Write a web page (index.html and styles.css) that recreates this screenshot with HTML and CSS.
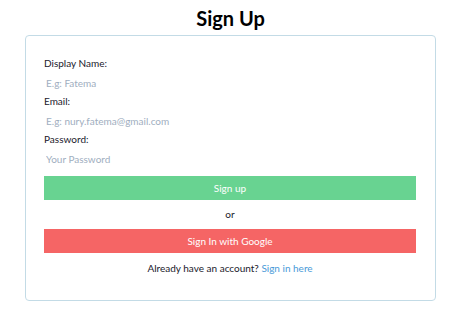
FILE: index.html
```html
<!DOCTYPE html>
<html lang="en">
<head>
    <meta charset="UTF-8">
    <meta name="viewport" content="width=device-width, initial-scale=1.0">
    <title>Sign Up</title>
    <link rel="stylesheet" href="styles.css">
</head>
<body>
    <div class="page">
        <h1>Sign Up</h1>
        <div class="card">
            <form class="signup-form" onsubmit="event.preventDefault()">
                <label for="displayName">Display Name:</label>
                <input type="text" id="displayName" placeholder="E.g: Fatema">
                <label for="email">Email:</label>
                <input type="email" id="email" placeholder="E.g: nury.fatema@gmail.com">
                <label for="password">Password:</label>
                <input type="password" id="password" placeholder="Your Password">
                <button type="submit" class="btn btn-green">Sign up</button>
            </form>
            <p class="or">or</p>
            <button class="btn btn-red">Sign In with Google</button>
            <p class="switch">Already have an account? <a href="#">Sign in here</a></p>
        </div>
    </div>
</body>
</html>
```

FILE: styles.css
```css
body {
    margin: 0;
    font-family: Lato, "Noto Sans", sans-serif;
    font-size: 10px;
    color: #1a202c;
    background: #fff;
}

.page {
    width: 411px;
    margin-left: 25px;
}

h1 {
    margin: 0;
    padding-top: 5px;
    height: 30px;
    line-height: 26px;
    font-size: 20px;
    font-weight: bold;
    text-align: center;
    color: #000;
}

.card {
    border: 1px solid #c3dbe6;
    border-radius: 4px;
    padding: 18px 19px 23px 18px;
}

.signup-form {
    display: flex;
    flex-direction: column;
}

.signup-form label {
    line-height: 19px;
}

.signup-form input {
    height: 19px;
    padding: 0 2px;
    border: none;
    outline: none;
    font-family: inherit;
    font-size: 10px;
    color: #1a202c;
}

.signup-form input::placeholder {
    color: #a0aec0;
}

.btn {
    display: block;
    width: 100%;
    height: 24px;
    border: none;
    color: #fff;
    font-family: inherit;
    font-size: 10px;
    cursor: pointer;
}

.btn-green {
    margin-top: 8px;
    background: #68d391;
}

.btn-red {
    background: #f56565;
}

.or {
    margin: 5px 0 6px;
    line-height: 18px;
    text-align: center;
}

.switch {
    margin: 6px 0 0;
    line-height: 18px;
    text-align: center;
}

.switch a {
    color: #4a9ad8;
    text-decoration: none;
}
```
